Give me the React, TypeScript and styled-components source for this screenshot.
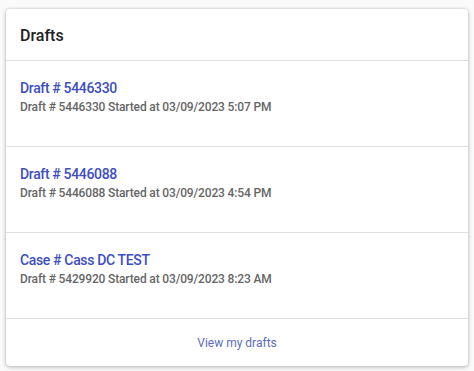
import { FC } from 'react'
import styled, { createGlobalStyle } from 'styled-components'

const GlobalStyle = createGlobalStyle`
  body {
    margin: 0;
    background: #fafafa;
    font-family: Roboto, 'Liberation Sans', Arial, sans-serif;
  }
`

const Page = styled.div`
  padding: 9px 6px 6px 6px;
  width: 474px;
  box-sizing: border-box;
`

const Card = styled.div`
  width: 462px;
  background: #fff;
  border-radius: 4px;
  box-shadow: 0 1px 4px rgba(0, 0, 0, 0.28), 0 0 2px rgba(0, 0, 0, 0.12);
  display: flex;
  flex-direction: column;
`

const Header = styled.div`
  height: 52px;
  box-sizing: border-box;
  display: flex;
  align-items: center;
  padding: 2px 14px 0 14px;
  border-bottom: 1px solid #e0e0e0;
`

const Heading = styled.h2`
  margin: 0;
  font-size: 16px;
  font-weight: 500;
  color: #212121;
`

const Item = styled.div`
  height: 86px;
  box-sizing: border-box;
  padding: 17px 14px 0 14px;
  border-bottom: 1px solid #e0e0e0;
  display: flex;
  flex-direction: column;
  gap: 1px;
`

const ItemTitle = styled.a`
  font-size: 14px;
  font-weight: 500;
  line-height: 20px;
  letter-spacing: -0.35px;
  color: #3d4ebf;
  text-decoration: none;
  cursor: pointer;
`

const ItemMeta = styled.div`
  font-size: 12px;
  font-weight: 500;
  line-height: 16px;
  letter-spacing: -0.15px;
  color: #666;
`

const Footer = styled.div`
  height: 47px;
  display: flex;
  align-items: center;
  justify-content: center;
`

const FooterLink = styled.a`
  font-size: 12px;
  color: #5c6bc0;
  text-decoration: none;
  cursor: pointer;
`

interface Draft {
  id: string
  title: string
  meta: string
}

const drafts: Draft[] = [
  { id: '5446330', title: 'Draft # 5446330', meta: 'Draft # 5446330 Started at 03/09/2023 5:07 PM' },
  { id: '5446088', title: 'Draft # 5446088', meta: 'Draft # 5446088 Started at 03/09/2023 4:54 PM' },
  { id: '5429920', title: 'Case # Cass DC TEST', meta: 'Draft # 5429920 Started at 03/09/2023 8:23 AM' },
]

const App: FC = () => {
  return <Page>
    <GlobalStyle />
    <Card>
      <Header>
        <Heading>Drafts</Heading>
      </Header>
      {drafts.map(d => <Item key={d.id}>
        <ItemTitle>{d.title}</ItemTitle>
        <ItemMeta>{d.meta}</ItemMeta>
      </Item>)}
      <Footer>
        <FooterLink>View my drafts</FooterLink>
      </Footer>
    </Card>
  </Page>
}

export default App
